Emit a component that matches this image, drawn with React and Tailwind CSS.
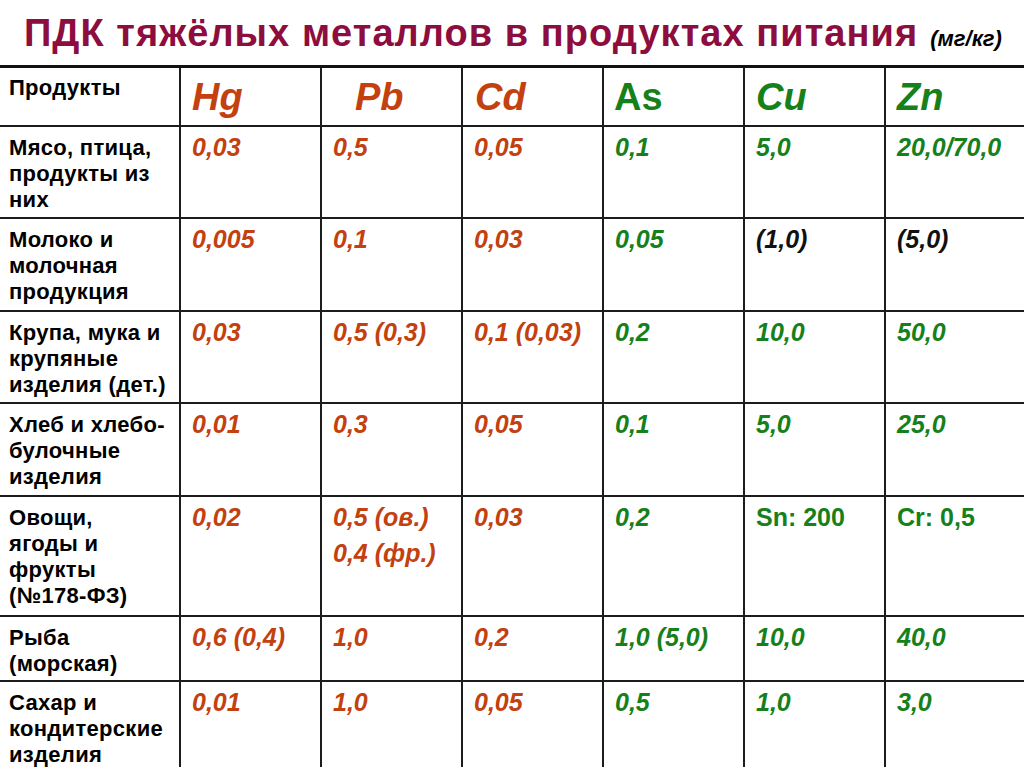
import React from 'react';

const RED = 'text-[#c3410f]';
const GREEN = 'text-[#16801a]';
const BLACK = 'text-[#111]';

const metals = [
  { name: 'Hg', color: RED, italic: true, pad: 'pl-[11px]' },
  { name: 'Pb', color: RED, italic: true, pad: 'pl-[33px]' },
  { name: 'Cd', color: RED, italic: true, pad: 'pl-[12px]' },
  { name: 'As', color: GREEN, italic: false, pad: 'pl-[10px]' },
  { name: 'Cu', color: GREEN, italic: true, pad: 'pl-[11px]' },
  { name: 'Zn', color: GREEN, italic: true, pad: 'pl-[11px]' },
];

// each value: [text, color, italic]
const rows = [
  {
    h: 'h-[92px]',
    product: ['Мясо, птица,', 'продукты из', 'них'],
    values: [
      ['0,03', RED], ['0,5', RED], ['0,05', RED],
      ['0,1', GREEN], ['5,0', GREEN], ['20,0/70,0', GREEN],
    ],
  },
  {
    h: 'h-[93px]',
    product: ['Молоко и', 'молочная', 'продукция'],
    values: [
      ['0,005', RED], ['0,1', RED], ['0,03', RED],
      ['0,05', GREEN], ['(1,0)', BLACK], ['(5,0)', BLACK],
    ],
  },
  {
    h: 'h-[92px]',
    product: ['Крупа, мука и', 'крупяные', 'изделия (дет.)'],
    values: [
      ['0,03', RED], ['0,5 (0,3)', RED], ['0,1 (0,03)', RED],
      ['0,2', GREEN], ['10,0', GREEN], ['50,0', GREEN],
    ],
  },
  {
    h: 'h-[93px]',
    product: ['Хлеб и хлебо-', 'булочные', 'изделия'],
    values: [
      ['0,01', RED], ['0,3', RED], ['0,05', RED],
      ['0,1', GREEN], ['5,0', GREEN], ['25,0', GREEN],
    ],
  },
  {
    h: 'h-[120px]',
    product: ['Овощи,', 'ягоды и', 'фрукты', '(№178-ФЗ)'],
    values: [
      ['0,02', RED], [['0,5 (ов.)', '0,4 (фр.)'], RED], ['0,03', RED],
      ['0,2', GREEN], ['Sn: 200', GREEN, false], ['Cr: 0,5', GREEN, false],
    ],
  },
  {
    h: 'h-[65px]',
    product: ['Рыба', '(морская)'],
    values: [
      ['0,6 (0,4)', RED], ['1,0', RED], ['0,2', RED],
      ['1,0 (5,0)', GREEN], ['10,0', GREEN], ['40,0', GREEN],
    ],
  },
  {
    h: 'h-[90px]',
    product: ['Сахар и', 'кондитерские', 'изделия'],
    values: [
      ['0,01', RED], ['1,0', RED], ['0,05', RED],
      ['0,5', GREEN], ['1,0', GREEN], ['3,0', GREEN],
    ],
  },
];

const grid = 'grid grid-cols-[181px_141px_141px_141px_141px_141px_1fr]';

const ValueCell = ({ value, last }) => {
  const [text, color, italic = true] = value;
  const lines = Array.isArray(text) ? text : [text];
  return (
    <div className={`${last ? '' : 'border-r-2'} border-[#1c1c1c] pl-[11px] pt-[7px] ${color} ${italic ? 'italic' : ''} font-bold text-[25px] leading-[26px] whitespace-nowrap`}>
      {lines.map((l, i) => (
        <div key={i} className={i > 0 ? 'mt-[10px]' : ''}>{l}</div>
      ))}
    </div>
  );
};

export default function App() {
  return (
    <div className="w-[1024px] h-[767px] overflow-hidden bg-white font-['Liberation_Sans',Arial,sans-serif]">
      <div className="h-[65px] pl-[24px] pt-[14px] flex items-baseline gap-[12px] whitespace-nowrap">
        <h1 className="text-[38px] leading-[38px] font-bold tracking-[1.05px] text-[#8c0d3e]">
          ПДК тяжёлых металлов в продуктах питания
        </h1>
        <span className="text-[22px] font-bold italic text-black">(мг/кг)</span>
      </div>

      <div className="border-t-[3px] border-[#111] w-[1030px]">
        <div className={`${grid} h-[59px] border-b-2 border-[#1c1c1c]`}>
          <div className="border-r-2 border-[#1c1c1c] pl-[9px] pt-[7px] text-[22px] leading-[26px] tracking-[0.3px] font-bold text-black">
            Продукты
          </div>
          {metals.map((m, i) => (
            <div
              key={m.name}
              className={`${i < 5 ? 'border-r-2' : ''} border-[#1c1c1c] ${m.pad} pt-[7px] text-[38px] leading-[44px] font-bold ${m.color} ${m.italic ? 'italic' : ''}`}
            >
              {m.name}
            </div>
          ))}
        </div>

        {rows.map((r, ri) => (
          <div key={ri} className={`${grid} ${r.h} border-b-2 border-[#1c1c1c]`}>
            <div className="border-r-2 border-[#1c1c1c] pl-[9px] pt-[8px] text-[22px] leading-[26px] tracking-[0.3px] font-bold text-black whitespace-nowrap">
              {r.product.map((l, i) => (
                <div key={i}>{l}</div>
              ))}
            </div>
            {r.values.map((v, vi) => (
              <ValueCell key={vi} value={v} last={vi === 5} />
            ))}
          </div>
        ))}
      </div>
    </div>
  );
}
